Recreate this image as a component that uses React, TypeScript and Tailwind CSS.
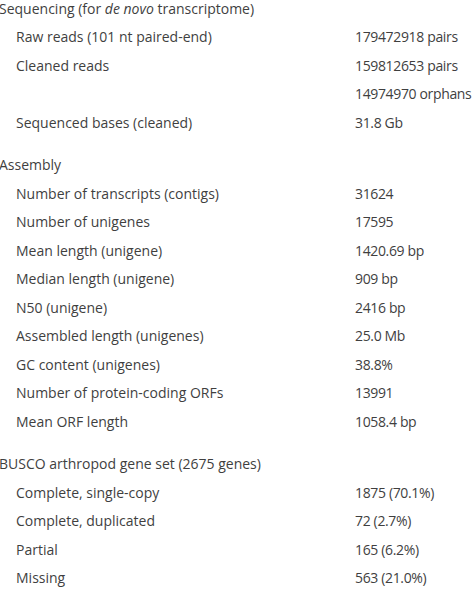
const sections: { title: React.ReactNode; rows: [string, string][] }[] = [
  {
    title: (
      <span>
        Sequencing (for <i>de novo</i> transcriptome)
      </span>
    ),
    rows: [
      ["Raw reads (101 nt paired-end)", "179472918 pairs"],
      ["Cleaned reads", "159812653 pairs"],
      ["", "14974970 orphans"],
      ["Sequenced bases (cleaned)", "31.8 Gb"],
    ],
  },
  {
    title: <span>Assembly</span>,
    rows: [
      ["Number of transcripts (contigs)", "31624"],
      ["Number of unigenes", "17595"],
      ["Mean length (unigene)", "1420.69 bp"],
      ["Median length (unigene)", "909 bp"],
      ["N50 (unigene)", "2416 bp"],
      ["Assembled length (unigenes)", "25.0 Mb"],
      ["GC content (unigenes)", "38.8%"],
      ["Number of protein-coding ORFs", "13991"],
      ["Mean ORF length", "1058.4 bp"],
    ],
  },
  {
    title: <span>BUSCO arthropod gene set (2675 genes)</span>,
    rows: [
      ["Complete, single-copy", "1875 (70.1%)"],
      ["Complete, duplicated", "72 (2.7%)"],
      ["Partial", "165 (6.2%)"],
      ["Missing", "563 (21.0%)"],
    ],
  },
];

export default function App() {
  return (
    <div className="w-[474px] h-[590px] overflow-hidden bg-white text-[#3f3f3f] font-['Open_Sans',sans-serif] text-[14px] whitespace-nowrap">
      <div className="-mt-[6px] flex flex-col gap-[14px]">
        {sections.map((s, i) => (
          <div key={i} className="flex flex-col">
            <div className="h-[28.5px] flex items-center -ml-[1px]">{s.title}</div>
            {s.rows.map(([label, value], j) => (
              <div key={j} className="h-[28.5px] flex items-center">
                <span className="pl-[16px] w-[355px] shrink-0">{label}</span>
                <span className="tracking-[-0.35px]">{value}</span>
              </div>
            ))}
          </div>
        ))}
      </div>
    </div>
  );
}
